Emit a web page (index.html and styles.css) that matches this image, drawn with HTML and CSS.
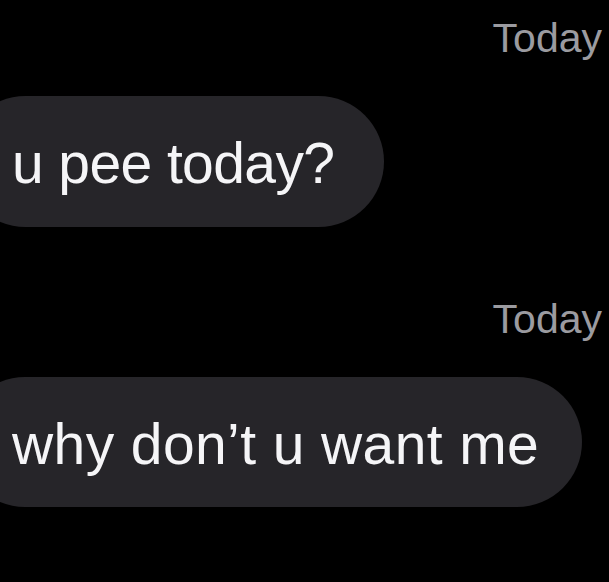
FILE: index.html
```html
<!DOCTYPE html>
<html>
<head>
<meta charset="utf-8">
<link rel="stylesheet" href="styles.css">
</head>
<body>
<div class="chat">
  <div class="stamp stamp-first">Today</div>
  <div class="bubble bubble-first"><span class="msg msg-first">u pee today?</span></div>
  <div class="stamp stamp-second">Today</div>
  <div class="bubble bubble-second"><span class="msg msg-second">why don’t u want me</span></div>
</div>
</body>
</html>
```

FILE: styles.css
```css
html, body {
  margin: 0;
  padding: 0;
  background: #000;
  overflow: hidden;
}
body {
  width: 609px;
  height: 582px;
  font-family: "Liberation Sans", Arial, sans-serif;
}
.chat {
  display: flex;
  flex-direction: column;
  align-items: flex-start;
}
.stamp {
  align-self: flex-end;
  color: #9b9ba0;
  font-size: 41px;
  line-height: 46px;
  padding-right: 7px;
}
.stamp-first {
  margin-top: 15px;
}
.stamp-second {
  margin-top: 69px;
}
.bubble {
  background: #262529;
  border-radius: 66px;
  display: flex;
  align-items: center;
  margin-left: -40px;
  padding-left: 52px;
  box-sizing: border-box;
}
.bubble-first {
  margin-top: 35px;
  height: 131px;
  width: 424px;
}
.bubble-second {
  margin-top: 35px;
  height: 130px;
  width: 622px;
}
.msg {
  color: #f5f5f7;
  font-size: 57px;
  line-height: 1;
  padding-top: 4px;
}
.msg-first {
  letter-spacing: -0.6px;
}
.msg-second {
  letter-spacing: 0.4px;
}
```
